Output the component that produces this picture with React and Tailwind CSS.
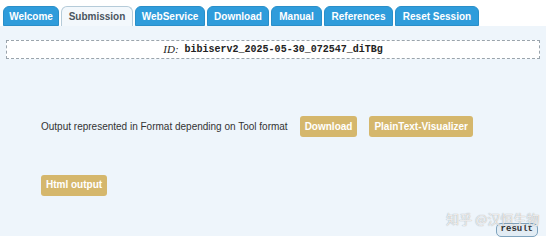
const tabs = [
  { label: "Welcome", w: "w-[56px]" },
  { label: "Submission", w: "w-[72px]", active: true },
  { label: "WebService", w: "w-[70px]" },
  { label: "Download", w: "w-[62px]" },
  { label: "Manual", w: "w-[51px]" },
  { label: "References", w: "w-[69px]" },
  { label: "Reset Session", w: "w-[84px]" },
]

const GoldButton = ({ children }) => (
  <button className="h-[21px] px-[5px] rounded-[3px] bg-[#d5b76c] text-white text-[10px] font-bold leading-none">
    {children}
  </button>
)

export default function App() {
  return (
    <div className="w-[554px] h-[245px] bg-white overflow-hidden font-['Liberation_Sans',Arial,sans-serif] relative">
      {/* Tabs */}
      <div className="flex items-end gap-[2px] pl-[3px] pt-[6px] h-[26px]">
        {tabs.map((t) => (
          <div
            key={t.label}
            className={`${t.w} h-[20px] flex items-center justify-center rounded-t-[6px] border text-[10px] font-bold ${
              t.active
                ? "bg-[#f3f8fc] border-[#b5cbd9] border-b-0 text-[#4a5560]"
                : "bg-[#2f9cdb] border-[#2a8fc9] text-white"
            }`}
          >
            {t.label}
          </div>
        ))}
      </div>

      {/* Panel */}
      <div className="w-[546px] h-[210px] bg-[#eef5fb] pt-[14px] px-[6px]">
        <div className="h-[19px] border border-dashed border-[#9aa4ac] bg-white flex items-center justify-center">
          <span className="font-['Liberation_Serif',serif] italic text-[11px] text-[#222] mr-[6px]">ID:</span>
          <span className="font-['Liberation_Mono',monospace] font-bold text-[10px] text-[#222]">
            bibiserv2_2025-05-30_072547_diTBg
          </span>
        </div>

        <div className="flex items-center mt-[57px] pl-[35px]">
          <span className="text-[10px] text-[#333]">Output represented in Format depending on Tool format</span>
          <div className="ml-[12px] flex gap-[12px]">
            <GoldButton>Download</GoldButton>
            <GoldButton>PlainText-Visualizer</GoldButton>
          </div>
        </div>

        <div className="mt-[34px] pl-[35px]">
          <GoldButton>Html output</GoldButton>
        </div>

        <div className="flex justify-end mt-[27px] pr-[2px]">
          <button className="h-[14px] px-[4px] rounded-[5px] border border-[#7fa3bd] bg-[#e2ecf4] text-[9px] font-bold text-[#333] font-['Liberation_Mono',monospace] leading-none">
            result
          </button>
        </div>
      </div>

      {/* watermark */}
      <div className="absolute left-[446px] top-[209px] text-[13px] text-white/80 font-['Noto_Sans_CJK_SC',sans-serif] [text-shadow:0_0_1px_#888] whitespace-nowrap">
        知乎 @汉恒生物
      </div>
    </div>
  )
}
